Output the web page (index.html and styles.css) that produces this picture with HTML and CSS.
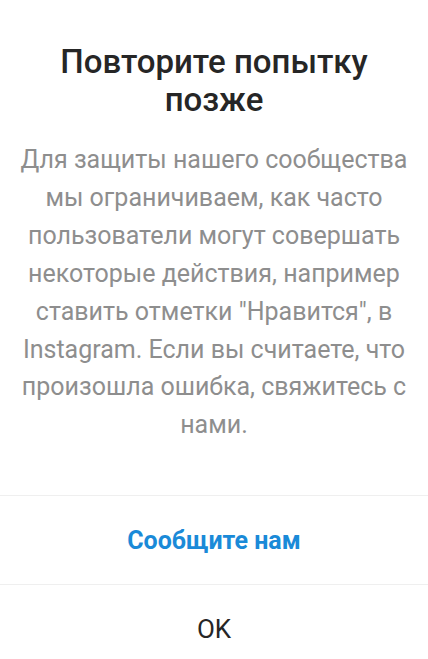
FILE: index.html
```html
<!DOCTYPE html>
<html lang="ru">
<head>
    <meta charset="UTF-8">
    <meta name="viewport" content="width=device-width, initial-scale=1.0">
    <title>Повторите попытку позже</title>
    <link rel="stylesheet" href="styles.css">
</head>
<body>

    <div class="dialog">
        <div class="dialog-body">
            <div class="title">Повторите попытку позже</div>
            <div class="message">Для защиты нашего сообщества мы ограничиваем, как часто пользователи могут совершать некоторые действия, например ставить отметки "Нравится", в Instagram. Если вы считаете, что произошла ошибка, свяжитесь с нами.</div>
        </div>
        <button class="action report">Сообщите нам</button>
        <button class="action ok">OK</button>
    </div>

</body>
</html>
```

FILE: styles.css
```css
body {
    margin: 0;
    background-color: #fff;
    font-family: Roboto, "Liberation Sans", sans-serif;
}
.dialog {
    display: flex;
    flex-direction: column;
    text-align: center;
}
.dialog-body {
    padding: 43px 12px 51px;
}
.title {
    font-size: 33px;
    font-weight: 500;
    line-height: 38px;
    color: #262626;
    padding: 0 40px;
    margin-bottom: 22px;
}
.message {
    font-size: 25px;
    line-height: 37.9px;
    color: #8e8e8e;
}
.action {
    font-family: inherit;
    background: none;
    border: none;
    border-top: 1px solid #efefef;
    height: 89px;
    padding: 0;
    cursor: pointer;
}
.action.report {
    font-size: 25px;
    font-weight: 700;
    color: #1a8ad8;
}
.action.ok {
    font-size: 26px;
    color: #262626;
}
```
